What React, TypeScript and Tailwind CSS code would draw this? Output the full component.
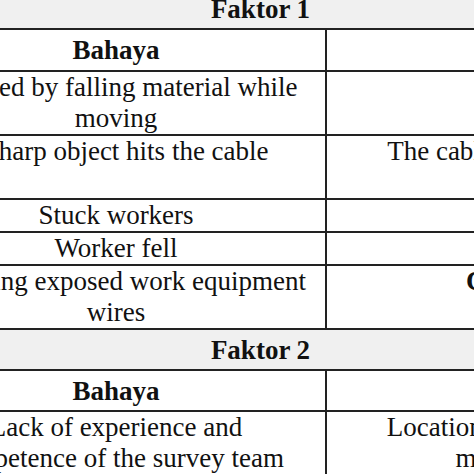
const serif = { fontFamily: '"Liberation Serif", "Times New Roman", serif' };

type Row = {
  left: string[];
  right: string[];
  rightBold?: boolean;
};

const faktor1: Row[] = [
  { left: ["Crushed by falling material while", "moving"], right: ["Injury"] },
  { left: ["A sharp object hits the cable"], right: ["The cable was cut by the", "object"] },
  { left: ["Stuck workers"], right: ["Injury"] },
  { left: ["Worker fell"], right: ["Injury"] },
  { left: ["Touching exposed work equipment", "wires"], right: ["Cable cut"], rightBold: true },
];

const faktor2: Row[] = [
  { left: ["Lack of experience and", "competence of the survey team"], right: ["Location of the survey is", "marshy area"] },
];

function FaktorRow({ label }: { label: string }) {
  return (
    <div className="border-b-2 border-[#222] bg-[#f0f0f0] pt-[5px] pb-[3px] pr-[101px] text-center font-bold leading-[31px]">
      {label}
    </div>
  );
}

function HeaderRow({ tight }: { tight?: boolean }) {
  return (
    <div className="flex border-b-2 border-[#222]">
      <div
        className={`w-[420px] shrink-0 border-r-2 border-[#222] pt-[5px] text-center font-bold leading-[31px] ${tight ? "pb-[3px]" : "pb-[4px]"}`}
      >
        Bahaya
      </div>
      <div className="w-[388px] shrink-0 pt-[5px] text-center font-bold leading-[31px]">Risiko</div>
    </div>
  );
}

function DataRow({ row }: { row: Row }) {
  const lines = Math.max(row.left.length, row.right.length);
  return (
    <div className="flex border-b-2 border-[#222]">
      <div
        className={`w-[420px] shrink-0 border-r-2 border-[#222] text-center leading-[31px] whitespace-nowrap ${lines === 2 ? "h-[62px]" : "h-[31px]"}`}
      >
        {row.left.map((l, i) => (
          <div key={i}>{l}</div>
        ))}
      </div>
      <div className={`w-[388px] shrink-0 text-center leading-[31px] whitespace-nowrap ${row.rightBold ? "font-bold" : ""}`}>
        {row.right.map((l, i) => (
          <div key={i}>{l}</div>
        ))}
      </div>
    </div>
  );
}

export default function App() {
  return (
    <div className="h-[474px] w-[474px] overflow-hidden bg-white text-[27px] text-[#111]" style={serif}>
      <div className="-ml-[93px] -mt-[11px] w-[808px]">
        <FaktorRow label="Faktor 1" />
        <HeaderRow />
        {faktor1.map((r, i) => (
          <DataRow key={i} row={r} />
        ))}
        <FaktorRow label="Faktor 2" />
        <HeaderRow tight />
        {faktor2.map((r, i) => (
          <DataRow key={i} row={r} />
        ))}
      </div>
    </div>
  );
}
